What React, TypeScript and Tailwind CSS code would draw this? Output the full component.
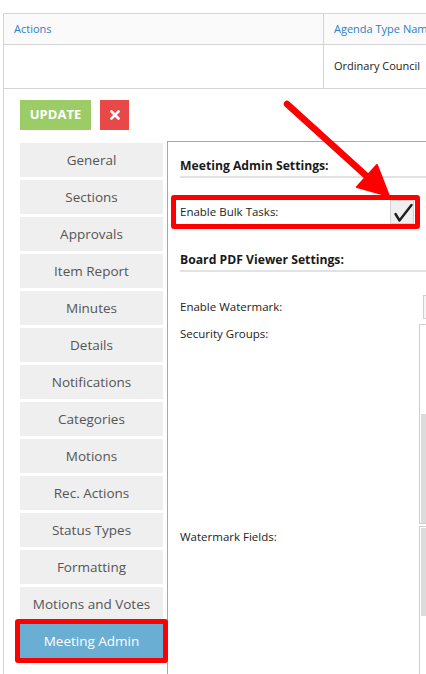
import React from "react";

const tabs = [
  "General",
  "Sections",
  "Approvals",
  "Item Report",
  "Minutes",
  "Details",
  "Notifications",
  "Categories",
  "Motions",
  "Rec. Actions",
  "Status Types",
  "Formatting",
  "Motions and Votes",
];

function Check() {
  return (
    <svg width="24" height="24" viewBox="0 0 24 24" className="block">
      <path
        d="M4.5 13 L8.5 19.5 L20.5 4"
        fill="none"
        stroke="#1e1e1e"
        strokeWidth="2.4"
        strokeLinecap="round"
        strokeLinejoin="round"
      />
    </svg>
  );
}

export default function App() {
  return (
    <div className="relative h-[674px] w-[426px] overflow-hidden bg-white font-['Open_Sans',sans-serif] text-[11.5px] text-[#333]">
      <div className="pl-[3px] pt-[13px]">
        <div className="w-[700px] border-l border-t border-[#d4d4d4]">
          {/* Table header */}
          <div className="flex h-[31px] border-b border-[#d4d4d4] bg-[#fafafa]">
            <div className="flex w-[320px] items-center border-r border-[#d4d4d4] pl-[10px] text-[11px] text-[#2d7fc4]">
              Actions
            </div>
            <div className="flex items-center pl-[10px] text-[11px] text-[#2d7fc4]">
              Agenda Type Name
            </div>
          </div>
          <div className="flex h-[44px] border-b border-[#d4d4d4]">
            <div className="w-[320px] border-r border-[#d4d4d4]" />
            <div className="flex items-center pl-[10px] text-[11px] text-[#222]">
              Ordinary Council
            </div>
          </div>

          {/* Detail area */}
          <div className="pl-[16px] pt-[11px]">
            <div className="flex gap-[9px]">
              <button className="h-[30px] w-[71px] bg-[#9ccc65] text-[13px] font-bold text-white">
                UPDATE
              </button>
              <button className="flex h-[30px] w-[29px] items-center justify-center bg-[#e84848]">
                <svg width="10" height="10" viewBox="0 0 10 10">
                  <path d="M1.5 1.5 L8.5 8.5 M8.5 1.5 L1.5 8.5" stroke="white" strokeWidth="2.6" strokeLinecap="square" />
                </svg>
              </button>
            </div>

            <div className="mt-[11px] flex">
              {/* Tabs */}
              <div className="flex w-[143px] flex-col gap-[3px] pt-[2px]">
                {tabs.map((t) => (
                  <div
                    key={t}
                    className="flex h-[34px] items-center justify-center bg-[#efefef] text-[13.5px] text-[#555]"
                  >
                    {t}
                  </div>
                ))}
                <div className="relative flex h-[34px] items-center justify-center bg-[#6aaed3] text-[13.5px] text-white">
                  Meeting Admin
                  <div className="absolute -inset-[5px] rounded-[3px] border-[5px] border-[#ff0000]" />
                </div>
              </div>

              {/* Panel */}
              <div className="ml-[4px] h-[600px] flex-1 border-l border-t border-[#7fb2d6] pl-[12px]">
                <div className="mt-[14px] h-[22px] border-b-2 border-[#e2e2e2] text-[12.2px] font-bold leading-[20px] text-[#1a1a1a]">
                  Meeting Admin Settings:
                </div>

                <div className="relative -ml-[4px] mt-[22px] flex h-[24px] w-[238px] items-center justify-between">
                  <span className="pl-[4px] text-[#222]">Enable Bulk Tasks:</span>
                  <div className="h-[24px] w-[24px] border border-[#d0d0d0] bg-[#efefef]">
                    <Check />
                  </div>
                  <div className="absolute -inset-[5px] right-[-6px] rounded-[3px] border-[5px] border-[#ff0000]" />
                </div>

                <div className="mt-[26px] h-[22px] border-b-2 border-[#e2e2e2] text-[12.2px] font-bold leading-[20px] text-[#1a1a1a]">
                  Board PDF Viewer Settings:
                </div>

                <div className="mt-[23px] flex h-[24px] items-center">
                  <span className="w-[243px] text-[#222]">Enable Watermark:</span>
                  <div className="h-[24px] w-[60px] border border-[#cfcfcf] bg-[#f6f6f6]" />
                </div>

                <div className="mt-[5px] flex h-[200px]">
                  <span className="w-[239px] pt-[1px] text-[#222]">Security Groups:</span>
                  <div className="h-[200px] w-[160px] border border-[#cfcfcf] pl-[1px]">
                    <div className="mt-[89px] h-[109px] w-[12px] bg-[#dcdcdc]" />
                  </div>
                </div>

                <div className="mt-[2px] flex h-[160px]">
                  <span className="w-[239px] pt-[2px] text-[#222]">Watermark Fields:</span>
                  <div className="h-[160px] w-[160px] border border-[#cfcfcf] pl-[1px]">
                    <div className="mt-[1px] h-[88px] w-[12px] bg-[#dcdcdc]" />
                  </div>
                </div>
              </div>
            </div>
          </div>
        </div>
      </div>

      {/* Annotation arrow */}
      <svg className="pointer-events-none absolute left-0 top-0" width="426" height="674">
        <line x1="287" y1="104" x2="372" y2="181" stroke="#ff0000" strokeWidth="6.5" strokeLinecap="round" />
        <polygon points="389,196 357,187 377,165" fill="#ff0000" stroke="#ff0000" strokeWidth="2" strokeLinejoin="round" />
      </svg>
    </div>
  );
}
